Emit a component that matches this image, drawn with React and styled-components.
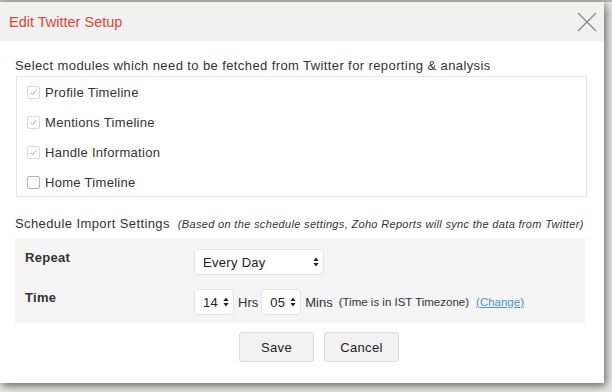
import React from "react";
import styled, { createGlobalStyle } from "styled-components";

const Global = createGlobalStyle`
  html, body { margin: 0; padding: 0; }
  body {
    width: 612px; height: 392px; overflow: hidden;
    background: #d9d9d6;
    font-family: "Liberation Sans", Arial, sans-serif;
    color: #333;
  }
`;

const Backdrop = styled.div`
  width: 612px;
  height: 392px;
  padding-top: 2px;
  box-sizing: border-box;
  background: linear-gradient(#b9b9b4 0 2px, #e6e6e4 2px);
`;

const Dialog = styled.div`
  width: 604px;
  height: 381px;
  background: #fff;
  box-shadow: 2px 3px 8px rgba(0, 0, 0, 0.55);
  display: flex;
  flex-direction: column;
`;

const Header = styled.div`
  height: 39px;
  flex-shrink: 0;
  background: #f1f1f1;
  display: flex;
  align-items: center;
  justify-content: space-between;
  padding: 0 5px 0 9px;
`;

const Title = styled.h1`
  margin: 0;
  font-size: 14.5px;
  font-weight: 400;
  color: #e0463c;
`;

const Close = styled.button`
  border: 0;
  background: none;
  padding: 0;
  width: 24px;
  height: 24px;
  display: flex;
  align-items: center;
  justify-content: center;
`;

const Body = styled.div`
  padding: 17px 17px 0 15px;
  display: flex;
  flex-direction: column;
`;

const SectionLabel = styled.div`
  font-size: 13px;
  letter-spacing: 0.4px;
  color: #333;
  line-height: 16px;
  display: flex;
  align-items: baseline;
`;

const Note = styled.span`
  font-size: 11px;
  letter-spacing: 0.33px;
  font-style: italic;
  margin-left: 8px;
`;

const ModuleBox = styled.div`
  margin: 2px 0 0 1px;
  border: 1px solid #e6e6e6;
  height: 121px;
  box-sizing: border-box;
  padding: 0 10px;
  display: flex;
  flex-direction: column;
`;

const CheckRow = styled.label`
  height: 30px;
  flex-shrink: 0;
  display: flex;
  align-items: center;
  gap: 5px;
  font-size: 13px;
  letter-spacing: 0.3px;
  color: #333;
`;

const Box = styled.span`
  width: 11px;
  height: 11px;
  border: 1px solid ${(p) => (p.$checked ? "#dadada" : "#b5b5b5")};
  border-radius: 2px;
  background: #fff;
  display: flex;
  align-items: center;
  justify-content: center;
`;

const ScheduleLabel = styled(SectionLabel)`
  margin-top: 19px;
`;

const Panel = styled.div`
  margin-top: 6px;
  width: 570px;
  background: #f5f5f5;
  padding: 11px 0 8px 10px;
  box-sizing: border-box;
  display: grid;
  grid-template-columns: 169px 1fr;
  row-gap: 14px;
`;

const FieldLabel = styled.div`
  font-size: 13px;
  font-weight: 700;
  letter-spacing: 0.3px;
  color: #333;
  padding-top: 1px;
`;

const FieldValue = styled.div`
  display: flex;
  align-items: center;
  font-size: 13px;
  color: #333;
`;

const Select = styled.div`
  width: ${(p) => p.$w}px;
  height: 26px;
  box-sizing: border-box;
  background: #fff;
  border: 1px solid #e3e3e3;
  border-radius: 4px;
  display: flex;
  align-items: center;
  justify-content: space-between;
  padding: 0 4px 0 8px;
  font-size: 13px;
  letter-spacing: 0.3px;
  color: #222;
`;

const Unit = styled.span`
  margin: 0 3px 0 4px;
`;

const Hint = styled.span`
  margin-left: 3px;
  font-size: 11.5px;
`;

const Link = styled.a`
  margin-left: 7px;
  font-size: 11.5px;
  color: #4a90e2;
  text-decoration: underline;
`;

const Footer = styled.div`
  display: flex;
  justify-content: center;
  gap: 10px;
  margin-top: 9px;
  padding-left: 36px;
`;

const Button = styled.button`
  width: 75px;
  height: 30px;
  background: #f2f2f2;
  border: 1px solid #dcdcdc;
  border-radius: 3px;
  font-family: inherit;
  font-size: 13px;
  letter-spacing: 0.3px;
  color: #222;
`;

const Arrows = () => (
  <svg width="6" height="10" viewBox="0 0 6 10">
    <path d="M3 0.5 L5.6 4 H0.4 Z M3 9.5 L5.6 6 H0.4 Z" fill="#222" />
  </svg>
);

const Tick = () => (
  <svg width="9" height="9" viewBox="0 0 9 9">
    <path d="M1.8 4.8 L3.6 6.6 L7.2 2.2" fill="none" stroke="#a8a8a8" strokeWidth="1" />
  </svg>
);

const modules = [
  { name: "Profile Timeline", checked: true },
  { name: "Mentions Timeline", checked: true },
  { name: "Handle Information", checked: true },
  { name: "Home Timeline", checked: false },
];

export default function App() {
  return (
    <>
      <Global />
      <Backdrop>
        <Dialog>
          <Header>
            <Title>Edit Twitter Setup</Title>
            <Close aria-label="Close">
              <svg width="20" height="20" viewBox="0 0 20 20">
                <path d="M1 1 L19 19 M19 1 L1 19" stroke="#8a8a8a" strokeWidth="1.3" />
              </svg>
            </Close>
          </Header>
          <Body>
            <SectionLabel>
              Select modules which need to be fetched from Twitter for reporting &amp; analysis
            </SectionLabel>
            <ModuleBox>
              {modules.map((m) => (
                <CheckRow key={m.name}>
                  <Box $checked={m.checked}>{m.checked && <Tick />}</Box>
                  {m.name}
                </CheckRow>
              ))}
            </ModuleBox>
            <ScheduleLabel>
              Schedule Import Settings
              <Note>(Based on the schedule settings, Zoho Reports will sync the data from Twitter)</Note>
            </ScheduleLabel>
            <Panel>
              <FieldLabel>Repeat</FieldLabel>
              <FieldValue>
                <Select $w={130}>
                  Every Day
                  <Arrows />
                </Select>
              </FieldValue>
              <FieldLabel>Time</FieldLabel>
              <FieldValue>
                <Select $w={40}>
                  14
                  <Arrows />
                </Select>
                <Unit>Hrs</Unit>
                <Select $w={40}>
                  05
                  <Arrows />
                </Select>
                <Unit>Mins</Unit>
                <Hint>(Time is in IST Timezone)</Hint>
                <Link href="#">(Change)</Link>
              </FieldValue>
            </Panel>
            <Footer>
              <Button>Save</Button>
              <Button>Cancel</Button>
            </Footer>
          </Body>
        </Dialog>
      </Backdrop>
    </>
  );
}
